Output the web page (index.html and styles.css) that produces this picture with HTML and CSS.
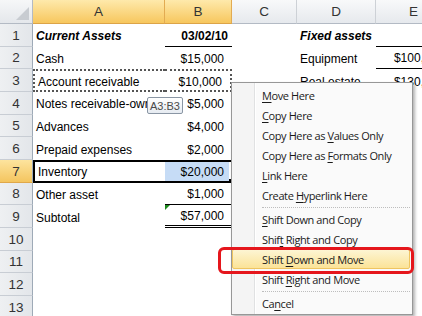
FILE: index.html
```html
<!DOCTYPE html>
<html lang="en">

<head>
    <meta charset="UTF-8">
    <meta name="viewport" content="width=device-width, initial-scale=1.0">
    <title>Move cells</title>
    <link rel="stylesheet" href="styles.css">
</head>

<body>

    <div class="sheet">
        <div class="row head-row">
            <div class="corner"></div>
            <div class="col-head sel">A</div>
            <div class="col-head sel">B</div>
            <div class="col-head">C</div>
            <div class="col-head">D</div>
            <div class="col-head">E</div>
        </div>

        <div class="row">
            <div class="row-head">1</div>
            <div class="cell bi">Current Assets</div>
            <div class="cell num date b under">03/02/10</div>
            <div class="cell"></div>
            <div class="cell bi">Fixed assets</div>
            <div class="cell under"></div>
        </div>

        <div class="row">
            <div class="row-head">2</div>
            <div class="cell">Cash</div>
            <div class="cell num">$15,000</div>
            <div class="cell"></div>
            <div class="cell">Equipment</div>
            <div class="cell num under">$100,000</div>
        </div>

        <!-- rad 3 er den som dras -->
        <div class="row">
            <div class="row-head">3</div>
            <div class="cell drag-l">Account receivable</div>
            <div class="cell num drag-r">$10,000</div>
            <div class="cell"></div>
            <div class="cell">Real estate</div>
            <div class="cell num">$130,000</div>
        </div>

        <div class="row">
            <div class="row-head">4</div>
            <div class="cell">Notes receivable-owner</div>
            <div class="cell num">$5,000</div>
            <div class="cell"></div>
            <div class="cell"></div>
            <div class="cell"></div>
        </div>

        <div class="row">
            <div class="row-head">5</div>
            <div class="cell">Advances</div>
            <div class="cell num">$4,000</div>
            <div class="cell"></div>
            <div class="cell"></div>
            <div class="cell"></div>
        </div>

        <div class="row">
            <div class="row-head">6</div>
            <div class="cell">Prepaid expenses</div>
            <div class="cell num">$2,000</div>
            <div class="cell"></div>
            <div class="cell"></div>
            <div class="cell"></div>
        </div>

        <div class="row">
            <div class="row-head sel">7</div>
            <div class="cell pick-l">Inventory</div>
            <div class="cell num pick-r">$20,000</div>
            <div class="cell"></div>
            <div class="cell"></div>
            <div class="cell"></div>
        </div>

        <div class="row">
            <div class="row-head">8</div>
            <div class="cell">Other asset</div>
            <div class="cell num under">$1,000</div>
            <div class="cell"></div>
            <div class="cell"></div>
            <div class="cell"></div>
        </div>

        <div class="row">
            <div class="row-head">9</div>
            <div class="cell">Subtotal</div>
            <div class="cell num total err">$57,000</div>
            <div class="cell"></div>
            <div class="cell"></div>
            <div class="cell"></div>
        </div>

        <div class="row">
            <div class="row-head">10</div>
        </div>
        <div class="row">
            <div class="row-head">11</div>
        </div>
        <div class="row">
            <div class="row-head">12</div>
        </div>
        <div class="row">
            <div class="row-head">13</div>
        </div>
    </div>

    <div class="tip">A3:B3</div>

    <div class="menu">
        <div class="item"><u>M</u>ove Here</div>
        <div class="item"><u>C</u>opy Here</div>
        <div class="item">Copy Here as <u>V</u>alues Only</div>
        <div class="item">Copy Here as <u>F</u>ormats Only</div>
        <div class="item"><u>L</u>ink Here</div>
        <div class="item">Create <u>H</u>yperlink Here</div>
        <div class="sep"></div>
        <div class="item"><u>S</u>hift Down and Copy</div>
        <div class="item">Shif<u>t</u> Right and Copy</div>
        <div class="item hot">Shift <u>D</u>own and Move</div>
        <div class="item">Shift <u>R</u>ight and Move</div>
        <div class="sep"></div>
        <div class="item">Ca<u>n</u>cel</div>
    </div>

    <div class="frame"></div>

</body>

</html>
```

FILE: styles.css
```css
body {
    margin: 0;
    background: #fff;
    overflow: hidden;
    font-family: "Liberation Sans", Arial, sans-serif;
}

.sheet {
    width: 452px;
}

.row {
    display: grid;
    grid-template-columns: 33px 132px 67px 65px 79px 76px;
    height: 22.67px;
}

.head-row {
    height: 24px;
}

.corner {
    position: relative;
    background: linear-gradient(#f6f7f8, #e4e7eb);
    border-right: 1px solid #b3bac4;
    border-bottom: 1px solid #b3bac4;
}

.corner::after {
    content: "";
    position: absolute;
    right: 3px;
    bottom: 3px;
    border-left: 13px solid transparent;
    border-bottom: 13px solid #c8ccd1;
}

.col-head {
    display: flex;
    align-items: center;
    justify-content: center;
    font-size: 13.5px;
    color: #333;
    background: linear-gradient(#f8f9fa, #e6e9ed);
    border-right: 1px solid #cdd1d6;
    border-bottom: 1px solid #b3bac4;
}

.col-head.sel {
    background: linear-gradient(#fee9ab, #f7c75e);
    border-right-color: #e2ab52;
    border-bottom-color: #dca448;
}

.row-head {
    display: flex;
    align-items: center;
    justify-content: center;
    padding-top: 1px;
    font-size: 13.5px;
    color: #333;
    background: linear-gradient(to right, #eef0f2, #e3e6ea);
    border-right: 1px solid #9eaab7;
    border-bottom: 1px solid #c8cdd4;
}

.row-head.sel {
    background: linear-gradient(#fde49e, #f4c55f);
    border-bottom-color: #e0a84a;
}

.cell {
    position: relative;
    display: flex;
    align-items: center;
    box-sizing: border-box;
    padding: 2px 2px 0 3px;
    font-size: 12px;
    color: #000;
    white-space: nowrap;
    overflow: hidden;
}

.num {
    justify-content: flex-end;
    padding-right: 8px;
}

.date {
    padding-right: 4px;
}

.b {
    font-weight: bold;
}

.bi {
    font-weight: bold;
    font-style: italic;
}

.under {
    border-bottom: 1px solid #000;
}

.total {
    border-bottom: 3px double #000;
}

.err::before {
    content: "";
    position: absolute;
    top: 0;
    left: 0;
    border-top: 5px solid #1d8a1d;
    border-right: 5px solid transparent;
}

/* omrisset til cellene som dras */
.drag-l,
.drag-r {
    border-top: 2px dotted #555;
    border-bottom: 2px dotted #555;
}

.drag-l {
    border-left: 2px dotted #555;
}

.drag-r {
    border-right: 2px dotted #555;
}

/* valgt rad 7 */
.pick-l,
.pick-r {
    border-top: 2px solid #000;
    border-bottom: 2px solid #000;
}

.pick-l {
    border-left: 2px solid #000;
}

.pick-r {
    background: #c6dcf6;
    box-shadow: inset -3px 0 0 #fff;
}

.pick-r::after {
    content: "";
    position: absolute;
    right: 0;
    bottom: -1px;
    width: 3px;
    height: 3px;
    background: #000;
}

.tip {
    position: absolute;
    left: 147px;
    top: 97px;
    width: 36px;
    height: 17px;
    box-sizing: border-box;
    border: 1px solid #8a96a4;
    border-radius: 2px;
    background: linear-gradient(#ffffff, #e6ebf1);
    font-size: 11px;
    line-height: 16px;
    text-align: center;
    color: #4a4a4a;
}

.menu {
    position: absolute;
    left: 231px;
    top: 82px;
    width: 182px;
    box-sizing: border-box;
    padding: 2px 0 1px;
    border: 1px solid #979797;
    background: linear-gradient(to right, #f4f4f4 0 22px, #e0e1e2 22px 23px, #fff 23px 24px, #fafafa 24px);
    box-shadow: 2px 2px 3px rgba(0, 0, 0, 0.3);
    font-family: "Open Sans", "Noto Sans", sans-serif;
    font-size: 11px;
    letter-spacing: -0.4px;
    color: #1a1a1a;
}

.item {
    height: 20px;
    line-height: 19px;
    box-sizing: border-box;
    margin-right: 2px;
    padding-left: 29px;
    border: 1px solid transparent;
    border-radius: 2px;
}

.item u {
    text-underline-offset: 2px;
}

.item.hot {
    background: linear-gradient(#fdf5d3, #fbe398);
    border-color: #efc560;
}

.sep {
    margin: 2px 2px 1px 30px;
    border-top: 1px dotted #bdbdbd;
}

.frame {
    position: absolute;
    left: 218px;
    top: 247px;
    width: 196px;
    height: 27px;
    box-sizing: border-box;
    border: 3px solid #e5161c;
    border-radius: 6px;
}
```
